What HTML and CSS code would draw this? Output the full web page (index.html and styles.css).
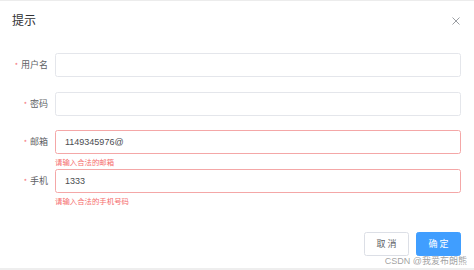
FILE: index.html
```html
<!DOCTYPE html>
<html lang="zh">
<head>
<meta charset="utf-8">
<link rel="stylesheet" href="styles.css">
</head>
<body>
<div class="page">
  <div class="top-line"></div>
  <div class="header">
    <span class="title">提示</span>
    <svg class="close" width="8" height="8" viewBox="0 0 8 8"><path d="M0.5 0.5 L7.5 7.5 M7.5 0.5 L0.5 7.5" stroke="#909399" stroke-width="0.9" fill="none"/></svg>
  </div>
  <div class="form">
    <div class="item">
      <label class="label"><span class="star">*</span>用户名</label>
      <div class="content"><div class="input"></div></div>
    </div>
    <div class="item">
      <label class="label"><span class="star">*</span>密码</label>
      <div class="content"><div class="input"></div></div>
    </div>
    <div class="item">
      <label class="label"><span class="star">*</span>邮箱</label>
      <div class="content"><div class="input err">1149345976@</div><div class="error">请输入合法的邮箱</div></div>
    </div>
    <div class="item">
      <label class="label"><span class="star">*</span>手机</label>
      <div class="content"><div class="input err">1333</div><div class="error">请输入合法的手机号码</div></div>
    </div>
  </div>
  <div class="footer">
    <button class="btn">取消</button>
    <button class="btn primary">确定</button>
  </div>
  <div class="bottom-bar"></div>
  <div class="watermark">CSDN @我爱布朗熊</div>
</div>
</body>
</html>
```
FILE: styles.css
```css
html, body {
  margin: 0;
  padding: 0;
  background: #fff;
}
.page {
  position: relative;
  width: 474px;
  height: 270px;
  overflow: hidden;
  font-family: "Noto Sans CJK SC", "Liberation Sans", sans-serif;
}
.top-line {
  height: 1px;
  background: #ececec;
}
.header {
  display: flex;
  justify-content: space-between;
  align-items: center;
  padding: 11px 14px 0 12px;
  height: 16px;
}
.title {
  font-size: 12px;
  line-height: 16px;
  color: #303133;
}
.close {
  display: block;
  margin-top: 1px;
}
.form {
  padding: 25px 13px 0 0;
}
.item {
  display: flex;
  margin-bottom: 14.67px;
}
.label {
  width: 48px;
  padding-right: 7px;
  text-align: right;
  font-size: 9px;
  line-height: 24px;
  color: #606266;
  flex-shrink: 0;
}
.star {
  color: #f56c6c;
  font-size: 7px;
  margin-right: 3px;
}
.content {
  flex: 1;
}
.input {
  height: 22px;
  border: 1px solid #e4e6eb;
  border-radius: 2.5px;
  padding: 0 9px;
  font-family: "Liberation Sans", "Noto Sans CJK SC", sans-serif;
  font-size: 9px;
  line-height: 22px;
  color: #4a4c50;
}
.input.err {
  border-color: #f4a7a7;
}
.error {
  height: 14.67px;
  margin-bottom: -14.67px;
  font-size: 7.4px;
  line-height: 10px;
  padding-top: 3px;
  box-sizing: border-box;
  color: #f56c6c;
}
.footer {
  display: flex;
  justify-content: flex-end;
  gap: 7px;
  padding: 24.3px 13px 0 0;
}
.btn {
  width: 45px;
  height: 24px;
  border: 1px solid #dcdfe6;
  border-radius: 2.5px;
  background: #fff;
  color: #606266;
  font-family: "Noto Sans CJK SC", sans-serif;
  font-size: 9px;
  letter-spacing: 2px;
  text-indent: 2px;
  padding: 0;
}
.btn.primary {
  background: #409eff;
  border-color: #409eff;
  color: #fff;
}
.bottom-bar {
  position: absolute;
  left: 0;
  right: 0;
  bottom: 0;
  height: 2px;
  background: #eeeeee;
}
.watermark {
  position: absolute;
  right: 7px;
  bottom: 4px;
  font-family: "Liberation Sans", "Noto Sans CJK SC", sans-serif;
  font-size: 9px;
  line-height: 10px;
  color: rgba(130, 130, 130, 0.75);
  text-shadow: 0 0 1px #fff;
}
```
